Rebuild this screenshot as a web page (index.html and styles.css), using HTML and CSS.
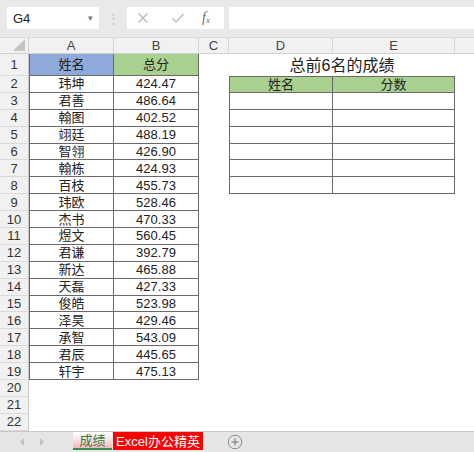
FILE: index.html
```html
<!DOCTYPE html>
<html>
<head>
<meta charset="utf-8">
<link rel="stylesheet" href="styles.css">
</head>
<body>
<div class="app">
  <div class="fbar">
    <div class="namebox"><span class="nb-text">G4</span><span class="nb-arrow">▾</span></div>
    <div class="dots">⋮</div>
    <div class="fbtns">
      <svg class="ico" width="12" height="12" viewBox="0 0 12 12"><path d="M1.5 1.5L10.5 10.5M10.5 1.5L1.5 10.5" stroke="#b5b5b5" stroke-width="1.2" fill="none"/></svg>
      <svg class="ico" width="14" height="12" viewBox="0 0 14 12"><path d="M1.5 6.5L5 10L12.5 2" stroke="#b5b5b5" stroke-width="1.2" fill="none"/></svg>
      <span class="fx">f<sub>x</sub></span>
    </div>
    <div class="finput"></div>
  </div>
  <div class="sheet">
    <div class="row hdr">
      <div class="corner"><svg width="12" height="12" viewBox="0 0 12 12"><path d="M12 0L12 12L0 12Z" fill="#c4c4c4"/></svg></div>
      <div class="ch">A</div><div class="ch">B</div><div class="ch">C</div><div class="ch">D</div><div class="ch">E</div><div class="ch last"></div>
    </div>
    <div class="row r1">
      <div class="rh">1</div>
      <div class="c ta blue">姓名</div><div class="c tb green">总分</div><div class="c"></div>
      <div class="c title">总前6名的成绩</div><div class="c"></div>
    </div>
    <div class="row"><div class="rh">2</div><div class="c ta">玮坤</div><div class="c tb">424.47</div><div class="c"></div><div class="c td top green">姓名</div><div class="c te top green">分数</div><div class="c"></div></div>
    <div class="row"><div class="rh">3</div><div class="c ta">君善</div><div class="c tb">486.64</div><div class="c"></div><div class="c td"></div><div class="c te"></div><div class="c"></div></div>
    <div class="row"><div class="rh">4</div><div class="c ta">翰图</div><div class="c tb">402.52</div><div class="c"></div><div class="c td"></div><div class="c te"></div><div class="c"></div></div>
    <div class="row"><div class="rh">5</div><div class="c ta">翊廷</div><div class="c tb">488.19</div><div class="c"></div><div class="c td"></div><div class="c te"></div><div class="c"></div></div>
    <div class="row"><div class="rh">6</div><div class="c ta">智翎</div><div class="c tb">426.90</div><div class="c"></div><div class="c td"></div><div class="c te"></div><div class="c"></div></div>
    <div class="row"><div class="rh">7</div><div class="c ta">翰栋</div><div class="c tb">424.93</div><div class="c"></div><div class="c td"></div><div class="c te"></div><div class="c"></div></div>
    <div class="row"><div class="rh">8</div><div class="c ta">百枝</div><div class="c tb">455.73</div><div class="c"></div><div class="c td"></div><div class="c te"></div><div class="c"></div></div>
    <div class="row"><div class="rh">9</div><div class="c ta">玮欧</div><div class="c tb">528.46</div><div class="c"></div><div class="c"></div><div class="c"></div><div class="c"></div></div>
    <div class="row"><div class="rh">10</div><div class="c ta">杰书</div><div class="c tb">470.33</div><div class="c"></div><div class="c"></div><div class="c"></div><div class="c"></div></div>
    <div class="row"><div class="rh">11</div><div class="c ta">煜文</div><div class="c tb">560.45</div><div class="c"></div><div class="c"></div><div class="c"></div><div class="c"></div></div>
    <div class="row"><div class="rh">12</div><div class="c ta">君谦</div><div class="c tb">392.79</div><div class="c"></div><div class="c"></div><div class="c"></div><div class="c"></div></div>
    <div class="row"><div class="rh">13</div><div class="c ta">新达</div><div class="c tb">465.88</div><div class="c"></div><div class="c"></div><div class="c"></div><div class="c"></div></div>
    <div class="row"><div class="rh">14</div><div class="c ta">天磊</div><div class="c tb">427.33</div><div class="c"></div><div class="c"></div><div class="c"></div><div class="c"></div></div>
    <div class="row"><div class="rh">15</div><div class="c ta">俊皓</div><div class="c tb">523.98</div><div class="c"></div><div class="c"></div><div class="c"></div><div class="c"></div></div>
    <div class="row"><div class="rh">16</div><div class="c ta">泽昊</div><div class="c tb">429.46</div><div class="c"></div><div class="c"></div><div class="c"></div><div class="c"></div></div>
    <div class="row"><div class="rh">17</div><div class="c ta">承智</div><div class="c tb">543.09</div><div class="c"></div><div class="c"></div><div class="c"></div><div class="c"></div></div>
    <div class="row"><div class="rh">18</div><div class="c ta">君辰</div><div class="c tb">445.65</div><div class="c"></div><div class="c"></div><div class="c"></div><div class="c"></div></div>
    <div class="row"><div class="rh">19</div><div class="c ta">轩宇</div><div class="c tb">475.13</div><div class="c"></div><div class="c"></div><div class="c"></div><div class="c"></div></div>
    <div class="row"><div class="rh">20</div><div class="c"></div><div class="c"></div><div class="c"></div><div class="c"></div><div class="c"></div><div class="c"></div></div>
    <div class="row"><div class="rh">21</div><div class="c"></div><div class="c"></div><div class="c"></div><div class="c"></div><div class="c"></div><div class="c"></div></div>
    <div class="row"><div class="rh">22</div><div class="c"></div><div class="c"></div><div class="c"></div><div class="c"></div><div class="c"></div><div class="c"></div></div>
  </div>
  <div class="tabbar">
    <div class="nav">
      <svg width="6" height="8" viewBox="0 0 6 8"><path d="M5 0L1 4L5 8Z" fill="#c2c2c2"/></svg>
      <svg width="6" height="8" viewBox="0 0 6 8"><path d="M1 0L5 4L1 8Z" fill="#c2c2c2"/></svg>
    </div>
    <div class="tab active">成绩</div>
    <div class="tab red">Excel办公精英</div>
    <div class="add"><svg width="16" height="16" viewBox="0 0 16 16"><circle cx="8" cy="8" r="6.8" fill="none" stroke="#8a8a8a" stroke-width="1"/><path d="M8 4.5V11.5M4.5 8H11.5" stroke="#707070" stroke-width="1"/></svg></div>
  </div>
</div>
</body>
</html>
```
FILE: styles.css
```css
* { box-sizing: border-box; }
html, body { margin: 0; padding: 0; }
body {
  width: 474px;
  height: 452px;
  overflow: hidden;
  background: #fff;
  font-family: "Liberation Sans", "Noto Sans CJK SC", sans-serif;
  font-size: 13px;
  color: #222;
}
.app { display: flex; flex-direction: column; height: 452px; }

.fbar {
  height: 38px;
  background: #e9e9e9;
  display: flex;
  align-items: flex-start;
  padding-top: 7px;
  padding-left: 7px;
  border-bottom: 1px solid #dadada;
}
.namebox {
  width: 92px;
  height: 22px;
  background: #fff;
  display: flex;
  align-items: center;
  justify-content: space-between;
  padding: 0 6px 0 6px;
}
.nb-text { font-size: 13px; color: #222; }
.nb-arrow { font-size: 9px; color: #777; }
.dots {
  width: 28px;
  height: 22px;
  display: flex;
  align-items: center;
  justify-content: center;
  color: #c4c4c4;
  font-size: 13px;
}
.fbtns {
  width: 97px;
  height: 22px;
  background: #fff;
  display: flex;
  align-items: center;
  padding-left: 10px;
  gap: 0;
}
.fbtns .ico:nth-child(1) { margin-right: 22px; }
.fbtns .ico:nth-child(2) { margin-right: 17px; }
.fx {
  font-family: "Liberation Serif", serif;
  font-style: italic;
  font-size: 14px;
  color: #6a6a6a;
  line-height: 1;
}
.fx sub { font-size: 9px; vertical-align: -1px; }
.finput {
  margin-left: 5px;
  flex: 1;
  height: 22px;
  background: #fff;
}

.sheet { flex: 1; display: flex; flex-direction: column; }
.row {
  display: grid;
  grid-template-columns: 29px 85px 85px 30px 104px 122px 1fr;
  height: 16.9px;
}
.row.hdr { height: 16px; background: #f1f1f1; border-bottom: 1px solid #d0d0d0; }
.row.r1 { height: 22px; grid-template-columns: 29px 85px 85px 30px 226px 1fr; }

.corner {
  display: flex;
  align-items: flex-end;
  justify-content: flex-end;
  padding: 0 3px 2px 0;
  border-right: 1px solid #d0d0d0;
}
.ch {
  display: flex;
  align-items: center;
  justify-content: center;
  color: #444;
  font-size: 13px;
  border-right: 1px solid #d6d6d6;
  line-height: 1;
}
.ch.last { border-right: none; }
.rh {
  background: #f1f1f1;
  border-right: 1px solid #c8c8c8;
  border-bottom: 1px solid #dadada;
  display: flex;
  align-items: center;
  justify-content: center;
  color: #333;
  font-size: 13px;
  line-height: 1;
}
.c {
  display: flex;
  align-items: center;
  justify-content: center;
  line-height: 1;
  white-space: nowrap;
  overflow: hidden;
}
.ta { border-left: 1px solid #6a6a6a; border-right: 1px solid #6a6a6a; border-bottom: 1px solid #6a6a6a; }
.tb { border-right: 1px solid #6a6a6a; border-bottom: 1px solid #6a6a6a; }
.td { border-left: 1px solid #6a6a6a; border-right: 1px solid #6a6a6a; border-bottom: 1px solid #6a6a6a; }
.te { border-right: 1px solid #6a6a6a; border-bottom: 1px solid #6a6a6a; }
.top { border-top: 1px solid #6a6a6a; }
.blue { background: #8eaadb; }
.green { background: #a9d08e; }
.title { font-size: 16px; color: #222; padding-top: 1px; }

.tabbar {
  height: 21px;
  background: #e6e6e6;
  border-top: 1px solid #c8c8c8;
  display: flex;
  align-items: flex-start;
}
.nav {
  width: 73px;
  height: 19px;
  display: flex;
  align-items: center;
  gap: 14px;
  padding-left: 19px;
}
.tab {
  height: 18px;
  display: flex;
  align-items: center;
  justify-content: center;
  font-size: 13px;
  line-height: 1;
}
.tab.active {
  width: 39px;
  background: linear-gradient(#ffffff 0%, #fbe4e4 45%, #f2b9b9 100%);
  color: #2f7d47;
  border-bottom: 2px solid #3c8a55;
}
.tab.red {
  width: 90px;
  margin-left: 1px;
  background: #ff0000;
  color: #fff;
}
.add {
  margin-left: 24px;
  height: 19px;
  display: flex;
  align-items: center;
}
```
